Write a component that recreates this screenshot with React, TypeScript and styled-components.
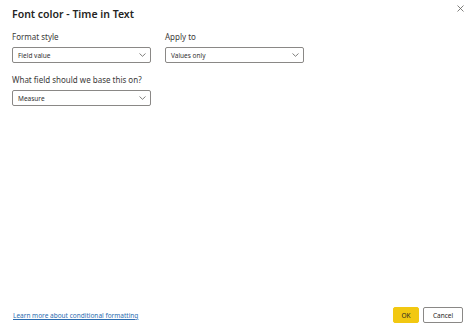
import React from 'react';
import styled, { createGlobalStyle } from 'styled-components';

const Global = createGlobalStyle`
  html, body { margin: 0; padding: 0; background: #fff; }
  body { font-family: "Noto Sans", "Open Sans", sans-serif; color: #252423; }
`;

const Dialog = styled.div`
  position: relative;
  width: 474px;
  height: 335px;
  box-sizing: border-box;
  padding: 7px 12px 12px 12px;
  display: flex;
  flex-direction: column;
  background: #fff;
`;

const Title = styled.h1`
  margin: 0;
  font-size: 10.5px;
  font-weight: 600;
  line-height: 14px;
  color: #252423;
`;

const Close = styled.button`
  position: absolute;
  top: 1px;
  right: 7px;
  width: 14px;
  height: 14px;
  border: 0;
  padding: 0;
  background: transparent;
  display: flex;
  align-items: center;
  justify-content: center;
`;

const Row = styled.div<{ $gap?: number }>`
  display: flex;
  gap: 14px;
  margin-top: ${p => p.$gap ?? 8}px;
`;

const Field = styled.div`
  display: flex;
  flex-direction: column;
  width: 139px;
`;

const Label = styled.label`
  font-size: 8px;
  line-height: 12px;
  color: #3b3a39;
  margin-bottom: 4px;
  white-space: nowrap;
`;

const Select = styled.div`
  height: 16px;
  box-sizing: border-box;
  border: 1px solid #8a8886;
  border-radius: 2px;
  display: flex;
  align-items: center;
  justify-content: space-between;
  padding: 0 4px 0 5px;
  font-size: 6.5px;
  color: #323130;
`;

const Spacer = styled.div`
  flex: 1;
`;

const Footer = styled.div`
  display: flex;
  align-items: center;
  justify-content: space-between;
`;

const Link = styled.a`
  font-size: 6.5px;
  color: #2b6cb0;
  text-decoration: underline;
  margin-left: 1px;
  margin-top: 1px;
`;

const Buttons = styled.div`
  display: flex;
  gap: 4px;
  margin-right: -1px;
`;

const Button = styled.button<{ $primary?: boolean }>`
  height: 16px;
  box-sizing: border-box;
  padding: 0;
  min-width: ${p => (p.$primary ? '26px' : '40px')};
  border-radius: 2px;
  font-family: inherit;
  font-size: 6.5px;
  color: #252423;
  border: 1px solid ${p => (p.$primary ? '#f2c811' : '#8a8886')};
  background: ${p => (p.$primary ? '#f2c811' : '#fff')};
`;

const Chevron = () => (
  <svg width="7" height="4" viewBox="0 0 7 4">
    <path d="M0.5 0.5 L3.5 3.3 L6.5 0.5" fill="none" stroke="#605e5c" strokeWidth="0.8" />
  </svg>
);

const Dropdown: React.FC<{ value: string }> = ({ value }) => (
  <Select>
    <span>{value}</span>
    <Chevron />
  </Select>
);

export default function App() {
  return (
    <>
      <Global />
      <Dialog>
        <Title>Font color - Time in Text</Title>
        <Close aria-label="Close">
          <svg width="7" height="7" viewBox="0 0 7 7">
            <path d="M0.5 0.5 L6.5 6.5 M6.5 0.5 L0.5 6.5" stroke="#605e5c" strokeWidth="0.8" />
          </svg>
        </Close>
        <Row $gap={10}>
          <Field>
            <Label>Format style</Label>
            <Dropdown value="Field value" />
          </Field>
          <Field>
            <Label>Apply to</Label>
            <Dropdown value="Values only" />
          </Field>
        </Row>
        <Row $gap={11}>
          <Field>
            <Label>What field should we base this on?</Label>
            <Dropdown value="Measure" />
          </Field>
        </Row>
        <Spacer />
        <Footer>
          <Link href="#">Learn more about conditional formatting</Link>
          <Buttons>
            <Button $primary>OK</Button>
            <Button>Cancel</Button>
          </Buttons>
        </Footer>
      </Dialog>
    </>
  );
}
